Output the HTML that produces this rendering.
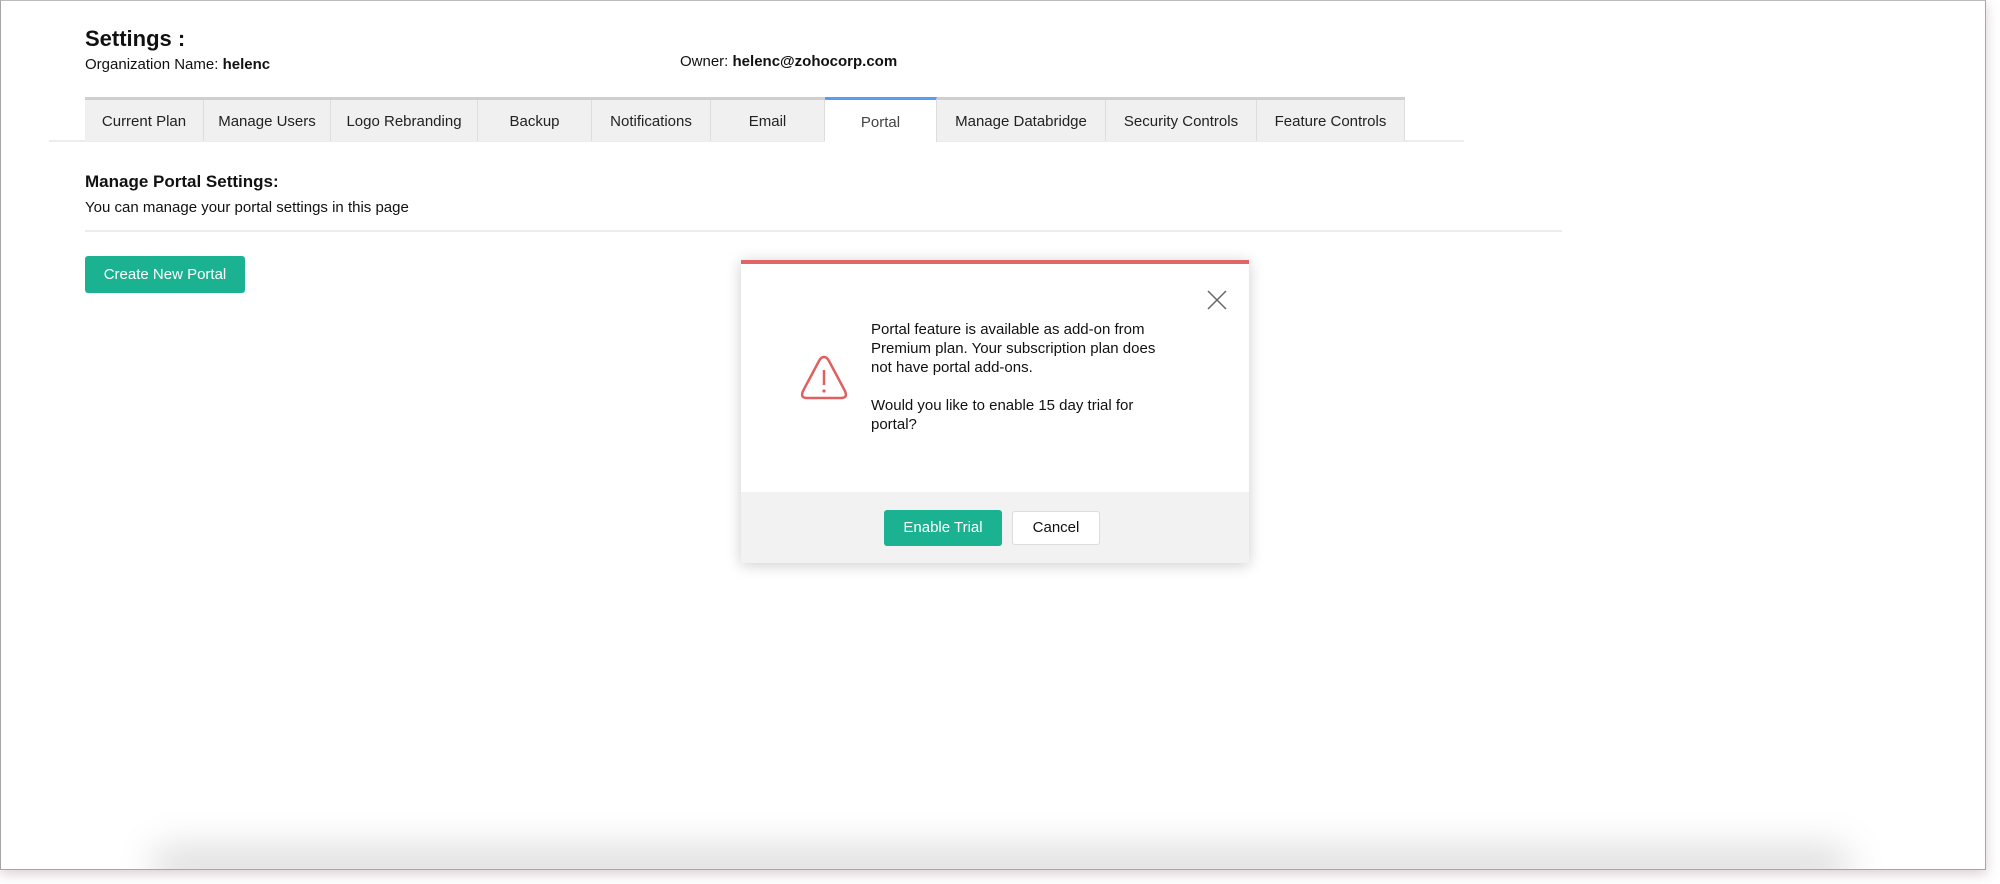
<!DOCTYPE html>
<html><head><meta charset="utf-8"><style>
*{box-sizing:border-box;margin:0;padding:0}
body{width:2000px;height:884px;background:#fff;font-family:"Liberation Sans",sans-serif;color:#111;position:relative;overflow:hidden}
.win{position:absolute;left:0;top:0;width:1986px;height:870px;border:1px solid #a8a4a8;border-top-color:#bbb;background:#fff;overflow:hidden;box-shadow:0 4px 12px rgba(120,60,80,.25)}
.a{position:absolute;white-space:nowrap}
.tab{position:absolute;top:99px;height:41px;background:#f0f0f0;border-right:1px solid #ddd;font-size:15px;line-height:44px;text-align:center;color:#222}
.shade{position:absolute;left:150px;width:1700px;top:845px;height:40px;background:rgba(0,0,0,.13);filter:blur(18px);border-radius:30px}
</style></head><body>
<div class="win">
<div class="shade"></div>
<div class="a" style="left:84px;top:25px;font-size:22px;font-weight:bold">Settings :</div>
<div class="a" style="left:84px;top:55px;font-size:15px">Organization Name: <b>helenc</b></div>
<div class="a" style="left:679px;top:52px;font-size:15px">Owner: <b>helenc@zohocorp.com</b></div>
<div class="a" style="left:48px;top:139px;width:1415px;height:2px;background:#ececec"></div>
<div class="a" style="left:84px;top:96px;width:1320px;height:3px;background:#cfcfcf"></div>
<div class="tab" style="left:84px;width:119px">Current Plan</div>
<div class="tab" style="left:203px;width:127px">Manage Users</div>
<div class="tab" style="left:330px;width:147px">Logo Rebranding</div>
<div class="tab" style="left:477px;width:114px">Backup</div>
<div class="tab" style="left:591px;width:119px">Notifications</div>
<div class="tab" style="left:710px;width:114px">Email</div>
<div class="tab" style="left:824px;top:96px;height:45px;width:112px;background:#fff;border-top:3px solid #5b9cf0;line-height:46px;color:#444">Portal</div>
<div class="tab" style="left:936px;width:169px">Manage Databridge</div>
<div class="tab" style="left:1105px;width:151px">Security Controls</div>
<div class="tab" style="left:1256px;width:148px">Feature Controls</div>
<div class="a" style="left:84px;top:171px;font-size:17px;font-weight:bold">Manage Portal Settings:</div>
<div class="a" style="left:84px;top:198px;font-size:15px">You can manage your portal settings in this page</div>
<div class="a" style="left:84px;top:229px;width:1477px;height:2px;background:#ececec"></div>
<div class="a" style="left:84px;top:255px;width:160px;height:37px;background:#1bb291;border-radius:3px;color:#fff;font-size:15px;line-height:37px;text-align:center">Create New Portal</div>

<div class="a" style="left:740px;top:259px;width:508px;height:303px;background:#fff;box-shadow:0 2px 14px rgba(0,0,0,.2);border-top:4px solid #e06666">
 <svg style="position:absolute;left:465px;top:25px" width="22" height="22" viewBox="0 0 22 22"><path d="M2 2L20 20M20 2L2 20" stroke="#666" stroke-width="1.5"/></svg>
 <svg style="position:absolute;left:58px;top:90px" width="50" height="48" viewBox="0 0 50 48"><path d="M25 3 Q22 3 20 7 L4 37 Q1 44 8 44 L42 44 Q49 44 46 37 L30 7 Q28 3 25 3Z" fill="none" stroke="#e06060" stroke-width="2.5"/><path d="M25 16V31" stroke="#e06060" stroke-width="2.5"/><circle cx="25" cy="37" r="1.6" fill="#e06060"/></svg>
 <div class="a" style="left:130px;top:56px;font-size:15px;line-height:19px;white-space:normal;width:298px">Portal feature is available as add-on from Premium plan. Your subscription plan does not have portal add-ons.<br><br>Would you like to enable 15 day trial for portal?</div>
 <div style="position:absolute;left:0;bottom:0;width:100%;height:71px;background:#f2f2f2"></div>
 <div class="a" style="left:143px;top:246px;width:118px;height:36px;background:#1bb291;border-radius:3px;color:#fff;font-size:15px;line-height:36px;text-align:center">Enable Trial</div>
 <div class="a" style="left:271px;top:247px;width:88px;height:34px;background:#fff;border:1px solid #ddd;border-radius:3px;font-size:15px;line-height:32px;text-align:center">Cancel</div>
</div>
</div>
</body></html>
